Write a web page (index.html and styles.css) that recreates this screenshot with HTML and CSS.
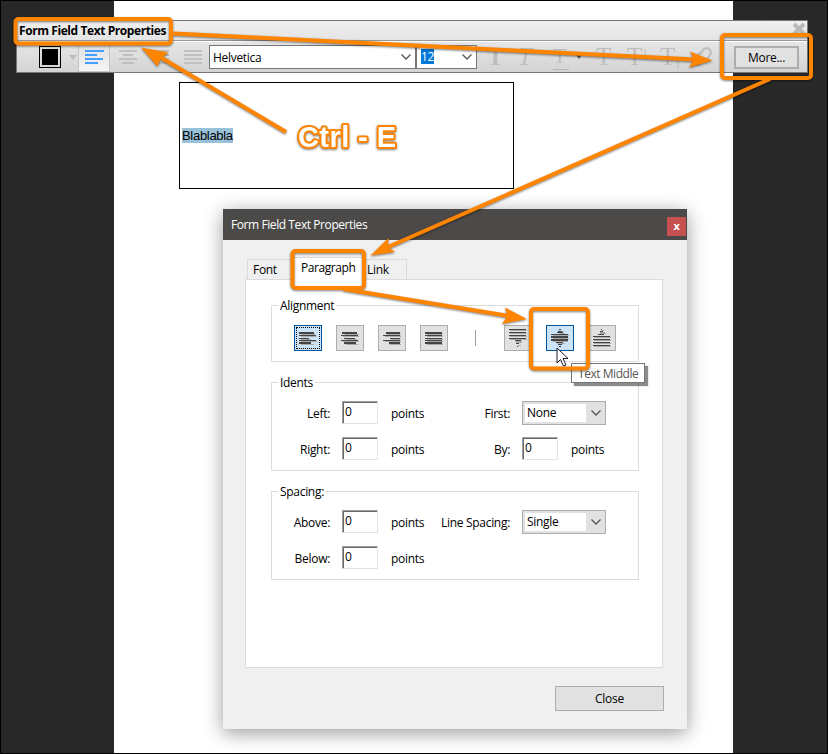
FILE: index.html
```html
<!DOCTYPE html>
<html lang="en">
<head>
    <meta charset="UTF-8">
    <title>Form Field Text Properties</title>
    <link rel="stylesheet" href="styles.css">
</head>
<body>
    <div class="workspace">
        <div class="page">
            <div class="form-field"><span class="selected-text">Blablabla</span></div>
        </div>
    </div>

    <!-- Floating toolbar -->
    <div class="toolbar">
        <div class="toolbar-title">
            <span>Form Field Text Properties</span>
            <svg class="toolbar-close" width="14" height="14" viewBox="0 0 14 14"><path d="M2 2l10 10M12 2L2 12"/></svg>
        </div>
        <div class="toolbar-row">
            <div class="swatch"><div class="swatch-color"></div></div>
            <svg class="swatch-arrow" width="8" height="5"><path d="M0 0h8L4 5z"/></svg>
            <div class="tool active"><svg width="20" height="16"><path d="M1 2h19M1 6h12M1 10h18M1 14h13"/></svg></div>
            <div class="tool center"><svg width="20" height="16"><path d="M1 2h18M5 6h10M1 10h18M4 14h12"/></svg></div>
            <div class="tool right"><svg width="20" height="16"><path d="M1 2h18M7 6h12M2 10h17M6 14h13"/></svg></div>
            <div class="tool justify"><svg width="20" height="16"><path d="M1 2h18M1 6h18M1 10h18M1 14h18"/></svg></div>
            <div class="combo font-combo"><span>Helvetica</span><svg width="10" height="6"><path d="M.5.5L5 5L9.5.5"/></svg></div>
            <div class="combo size-combo"><span class="marked">12</span><svg width="10" height="6"><path d="M.5.5L5 5L9.5.5"/></svg></div>
            <div class="letter bold">T</div>
            <div class="letter italic">T</div>
            <div class="letter underline">T</div>
            <svg class="underline-arrow" width="6" height="4"><path d="M0 0h6L3 4z"/></svg>
            <div class="letter strike">T</div>
            <div class="letter super">T<sup>1</sup></div>
            <div class="letter sub">T<sub>1</sub></div>
            <svg class="link-icon" width="22" height="22" viewBox="0 0 22 22"><path d="M9 8l3-4a4 4 0 0 1 7 5l-3 4a4 4 0 0 1-5 1M12 14l-3 4a4 4 0 0 1-6-5l3-4a4 4 0 0 1 5-1"/></svg>
            <button class="more">More...</button>
        </div>
    </div>

    <!-- Properties dialog -->
    <div class="dialog">
        <div class="dialog-title">
            <span>Form Field Text Properties</span>
            <div class="dialog-close">x</div>
        </div>
        <div class="tabs">
            <div class="tab font">Font</div>
            <div class="tab current">Paragraph</div>
            <div class="tab link">Link</div>
        </div>
        <div class="panel">
            <div class="group alignment">
                <div class="legend">Alignment</div>
                <div class="buttons">
                    <div class="icon-button pressed focus"><svg width="20" height="14"><path class="shade" d="M3 3.5h14M3 5.5h15M3 8.5h10M3 10.5h16M3 13.5h13"/><path d="M1 1.5h15M1 2.5h15M1 4.5h17M1 7.5h10M1 9.5h17M1 11.5h12M1 12.5h12"/></svg></div>
                    <div class="icon-button"><svg width="20" height="14"><path class="shade" d="M5 3.5h14M3 5.5h16M6 8.5h11M3 10.5h16M6 13.5h12"/><path d="M2 1.5h15M2 2.5h15M1 4.5h17M4 7.5h11M1 9.5h17M4 11.5h12M4 12.5h12"/></svg></div>
                    <div class="icon-button"><svg width="20" height="14"><path class="shade" d="M5 3.5h14M3 5.5h16M9 8.5h10M3 10.5h16M8 13.5h11"/><path d="M4 1.5h14M4 2.5h14M1 4.5h17M8 7.5h10M1 9.5h17M7 11.5h11M7 12.5h11"/></svg></div>
                    <div class="icon-button"><svg width="20" height="14"><path class="shade" d="M3 3.5h16M3 5.5h16M3 8.5h16M3 10.5h16M3 13.5h16"/><path d="M1 1.5h17M1 2.5h17M1 4.5h17M1 7.5h17M1 9.5h17M1 11.5h17M1 12.5h17"/></svg></div>
                    <div class="divider"></div>
                    <div class="icon-button"><svg width="20" height="20"><path class="shade" d="M2 2.5h17M2 5.5h17M2 8.5h17M2 11.5h17M8 13.5h6M8 14.5h6M10 17.5h3"/><path d="M1 1.5h17M1 4.5h17M1 7.5h17M1 10.5h17M7 12.5h6M8 15.5h3M9 18.5h1"/></svg></div>
                    <div class="icon-button pressed"><svg width="20" height="20"><path class="shade" d="M10 3.5h4M9 5.5h6M3 7.5h16M3 10.5h16M3 13.5h15M7 15.5h8"/><path d="M9 1.5h2M8 3.5h4M7 4.5h6M1 6.5h17M1 8.5h17M1 9.5h17M1 11.5h17M1 12.5h17M6 14.5h7M8 16.5h4M9 18.5h2"/></svg></div>
                    <div class="icon-button"><svg width="20" height="20"><path class="shade" d="M10 2.5h2M8 4.5h5M8 5.5h6M2 9.5h17M2 12.5h17M2 15.5h17M2 18.5h17"/><path d="M9 1.5h1M8 3.5h3M6 6.5h6M1 8.5h17M1 11.5h17M1 14.5h17M1 17.5h17"/></svg></div>
                </div>
            </div>

            <div class="group idents">
                <div class="legend">Idents</div>
                <div class="fields">
                    <label>Left:</label>
                    <div class="input">0</div>
                    <span>points</span>
                    <label>First:</label>
                    <div class="select"><span>None</span><svg width="10" height="6"><path d="M.5.5L5 5L9.5.5"/></svg></div>
                    <label>Right:</label>
                    <div class="input">0</div>
                    <span>points</span>
                    <label>By:</label>
                    <div class="with-unit"><div class="input">0</div><span>points</span></div>
                </div>
            </div>

            <div class="group spacing">
                <div class="legend">Spacing:</div>
                <div class="fields">
                    <label>Above:</label>
                    <div class="input">0</div>
                    <span>points</span>
                    <label>Line Spacing:</label>
                    <div class="select"><span>Single</span><svg width="10" height="6"><path d="M.5.5L5 5L9.5.5"/></svg></div>
                    <label>Below:</label>
                    <div class="input">0</div>
                    <span>points</span>
                </div>
            </div>
        </div>
        <button class="close-button">Close</button>
    </div>

    <div class="tooltip">Text Middle</div>

    <!-- Annotations -->
    <svg class="notes" width="828" height="754" viewBox="0 0 828 754">
        <g class="boxes">
            <rect x="15.5" y="19" width="155.5" height="24.5" rx="3"/>
            <rect x="722" y="35" width="89" height="43" rx="3"/>
            <rect x="292.5" y="251" width="71.5" height="37" rx="3"/>
            <rect x="531" y="309" width="57" height="59.5" rx="3"/>
        </g>
        <g class="lines">
            <path d="M173 33.5L695 59.5"/>
            <path d="M286 132L160 57"/>
            <path d="M770 79L388 247"/>
            <path d="M343 289L509 316"/>
        </g>
        <g class="heads">
            <path d="M712.5 60.5L690 51.5L694 59.5L689 67.5z"/>
            <path d="M141 47.5L168.5 52.5L161 58L157.5 66.5z"/>
            <path d="M370.5 255.5L388.5 238L388 247L395 252z"/>
            <path d="M527 319L505 307.5L507.5 316L502 324z"/>
        </g>
        <text class="shortcut" x="298" y="146.5" textLength="98">Ctrl - E</text>
    </svg>
    <svg class="cursor" width="13" height="20" viewBox="0 0 13 20"><path d="M1 1v15l3.5-3.5 3 6.5 2.5-1-3-6.5h5z"/></svg>
</body>
</html>
```
FILE: styles.css
```css
body {
    margin: 0;
    font-family: "Open Sans", "Noto Sans", sans-serif;
    font-size: 12px;
    letter-spacing: -0.3px;
    color: #000;
}
.workspace {
    box-sizing: border-box;
    width: 828px;
    height: 754px;
    border: 1px solid #000;
    background-color: #282828;
    display: flex;
}
.page {
    width: 619px;
    margin-left: 113px;
    background-color: #fff;
}
.form-field {
    box-sizing: border-box;
    width: 335px;
    height: 107px;
    margin: 81px 0 0 65px;
    padding-left: 2px;
    border: 1px solid #000;
    display: flex;
    align-items: center;
}
.selected-text {
    font-family: "Liberation Sans", sans-serif;
    font-size: 13px;
    line-height: 15px;
    letter-spacing: -0.3px;
    background-color: #99c1da;
}

/* toolbar */
.toolbar {
    position: absolute;
    left: 16px;
    top: 20px;
    box-sizing: border-box;
    width: 792px;
    height: 53px;
    border: 1px solid #777;
    background-color: #dcdcdc;
}
.toolbar-title {
    box-sizing: border-box;
    height: 20px;
    padding: 0 1px 0 2px;
    border-bottom: 1px solid #999;
    background: linear-gradient(#f0f0f0, #e4e4e4);
    display: flex;
    justify-content: space-between;
    font-weight: bold;
    line-height: 19px;
    letter-spacing: -0.42px;
}
.toolbar-close {
    margin-top: 1px;
}
.toolbar-close path {
    stroke: #b9b9b9;
    stroke-width: 4;
}
.toolbar-row {
    display: flex;
    align-items: center;
    height: 31px;
    box-sizing: border-box;
    border-top: 1px solid #fff;
    background: linear-gradient(#e6e6e6, #d4d4d4);
}
.swatch {
    box-sizing: border-box;
    width: 22px;
    height: 22px;
    margin-left: 22px;
    padding: 2px;
    border: 1px solid #000;
}
.swatch-color {
    height: 16px;
    background-color: #000;
}
.swatch-arrow {
    margin-left: 8px;
    fill: #bbb;
}
.tool {
    width: 20px;
    height: 16px;
}
.tool svg, .icon-button svg {
    display: block;
}
.tool path {
    stroke: #c0c0c0;
    stroke-width: 2;
}
.tool.active {
    box-sizing: border-box;
    width: 32px;
    height: 30px;
    margin-left: 1px;
    padding: 6px 5px;
    border: 1px solid #c6c6c6;
    background: linear-gradient(#e0e0e0, #f4f4f4);
}
.tool.active path {
    stroke: #459fff;
}
.tool.center {
    margin-left: 8px;
}
.tool.right {
    margin-left: 12px;
}
.tool.justify {
    margin-left: 13px;
}
.combo {
    box-sizing: border-box;
    height: 24px;
    border: 1px solid #767676;
    background-color: #fff;
    display: flex;
    align-items: center;
    justify-content: space-between;
    padding: 0 4px 0 3px;
}
.combo svg path, .select svg path {
    fill: none;
    stroke: #555;
    stroke-width: 1.3;
}
.font-combo {
    width: 207px;
    margin-left: 6px;
}
.size-combo {
    width: 61px;
    padding-left: 4px;
}
.marked {
    height: 15px;
    line-height: 15px;
    margin-top: -2px;
    color: #fff;
    background-color: #0078d7;
}
.letter {
    width: 16px;
    font-family: "Liberation Serif", serif;
    font-size: 25px;
    font-weight: bold;
    line-height: 28px;
    letter-spacing: 0;
    color: #bebebe;
    white-space: nowrap;
}
.letter.bold {
    margin-left: 10px;
}
.letter.italic {
    margin-left: 15px;
    font-style: italic;
    font-weight: normal;
}
.letter.underline {
    height: 24px;
    line-height: 22px;
    margin-left: 19px;
    font-size: 22px;
    font-weight: normal;
    border-bottom: 1px solid #b5b5b5;
}
.underline-arrow {
    margin-left: 7px;
    fill: #666;
}
.letter.strike, .letter.super, .letter.sub {
    font-weight: normal;
}
.letter.strike {
    margin-left: 14px;
}
.letter.super, .letter.sub {
    width: 22px;
}
.letter.super {
    margin-left: 15px;
}
.letter.sub {
    margin-left: 11px;
}
.letter sup, .letter sub {
    font-size: 11px;
    line-height: 0;
}
.letter sup {
    vertical-align: 9px;
}
.letter sub {
    vertical-align: -3px;
}
.link-icon {
    margin-left: 9px;
    fill: none;
    stroke: #bebebe;
    stroke-width: 2.2;
}
button {
    box-sizing: border-box;
    padding: 0;
    border: 1px solid #adadad;
    background-color: #e1e1e1;
    font: inherit;
    letter-spacing: inherit;
}
.more {
    width: 65px;
    height: 23px;
    margin: 0 8px 0 auto;
    border-width: 2px;
}

/* dialog */
.dialog {
    position: absolute;
    z-index: 0;
    left: 223px;
    top: 209px;
    width: 464px;
    height: 520px;
    background-color: #f0f0f0;
    box-shadow: 0 4px 18px rgba(0, 0, 0, 0.4);
    display: flex;
    flex-direction: column;
}
.dialog-title {
    height: 31px;
    padding-left: 8px;
    background-color: #4c4a48;
    color: #fff;
    line-height: 31px;
    letter-spacing: -0.42px;
    display: flex;
    justify-content: space-between;
}
.dialog-close {
    width: 19px;
    height: 19px;
    margin: 8px 1px 0 0;
    background-color: #c75050;
    font-size: 11px;
    font-weight: bold;
    line-height: 18px;
    text-align: center;
}
.tabs {
    display: flex;
    align-items: flex-end;
    height: 22px;
    margin: 17px 0 0 24px;
}
.tab {
    box-sizing: border-box;
    height: 20px;
    border: 1px solid #d9d9d9;
    border-bottom: none;
    line-height: 20px;
}
.tab.font {
    width: 45px;
    padding-left: 5px;
}
.tab.current {
    width: 74px;
    height: 23px;
    margin-bottom: -1px;
    padding-left: 8px;
    background-color: #fff;
    line-height: 20px;
    letter-spacing: -0.42px;
    z-index: 1;
}
.tab.link {
    width: 41px;
    padding-left: 1px;
    border-left: none;
}
.panel {
    box-sizing: border-box;
    width: 418px;
    height: 389px;
    margin-left: 22px;
    padding: 25px 23px 0 25px;
    border: 1px solid #dcdcdc;
    background-color: #fff;
}
.group {
    box-sizing: border-box;
    width: 368px;
    border: 1px solid #dcdcdc;
}
.alignment {
    height: 57px;
}
.idents, .spacing {
    height: 89px;
    margin-top: 20px;
}
.legend {
    width: max-content;
    height: 16px;
    margin: -9px 0 0 6px;
    padding: 0 2px;
    background-color: #fff;
    line-height: 18px;
}
.buttons {
    display: flex;
    align-items: center;
    gap: 14px;
    margin: 12px 0 0 22px;
}
.icon-button {
    box-sizing: border-box;
    width: 28px;
    height: 26px;
    border: 1px solid #adadad;
    background-color: #e1e1e1;
    display: flex;
    align-items: center;
    justify-content: center;
}
.icon-button path {
    stroke: #444;
    stroke-width: 1;
}
.icon-button .shade {
    stroke: #a9a9a9;
}
.icon-button.pressed {
    border-color: #005499;
    background-color: #cce4f7;
}
.icon-button.focus svg {
    padding: 3px 1px;
    outline: 1px dotted #000;
}
.divider {
    width: 1px;
    height: 16px;
    margin: 0 14px 0 13px;
    background-color: #a0a0a0;
}
.fields {
    display: grid;
    grid-template-columns: 58px 36px 33px 75px 84px;
    grid-template-rows: 24px 24px;
    column-gap: 12px;
    row-gap: 12px;
    margin-top: 11px;
    line-height: 25px;
}
.fields label {
    text-align: right;
    white-space: nowrap;
}
.fields > span {
    padding-left: 1px;
}
.input {
    box-sizing: border-box;
    width: 36px;
    height: 23px;
    padding: 1px 0 0 2px;
    border: 1px solid #e3e3e3;
    border-top-color: #a0a0a0;
    border-left-color: #a0a0a0;
    background-color: #fff;
    box-shadow: inset 1px 1px #696969;
    line-height: 18px;
}
.select {
    box-sizing: border-box;
    height: 24px;
    padding: 2px 4px 2px 2px;
    border: 1px solid #adadad;
    background-color: #e1e1e1;
    display: flex;
    align-items: center;
    justify-content: space-between;
}
.select span {
    width: 59px;
    height: 18px;
    padding-left: 2px;
    background-color: #fff;
    line-height: 18px;
}
.with-unit {
    display: flex;
    gap: 13px;
}
.close-button {
    width: 109px;
    height: 25px;
    margin: 18px 0 0 332px;
}
.tooltip {
    position: absolute;
    left: 571px;
    top: 363px;
    box-sizing: border-box;
    width: 74px;
    height: 20px;
    padding-left: 6px;
    border: 1px solid #767676;
    background-color: #fff;
    box-shadow: 3px 3px 1px rgba(0, 0, 0, 0.45);
    color: #575757;
    line-height: 19px;
    letter-spacing: -0.45px;
    white-space: nowrap;
}

/* annotations */
.notes {
    position: absolute;
    left: 0;
    top: 0;
    pointer-events: none;
    filter: drop-shadow(0 1px 1px rgba(0, 0, 0, 0.5));
}
.boxes rect, .lines path {
    fill: none;
    stroke: #ff8400;
    stroke-width: 4;
}
.heads path {
    fill: #ff8400;
}
.shortcut {
    font-family: "Liberation Sans", sans-serif;
    font-size: 29px;
    font-weight: bold;
    letter-spacing: 0;
    fill: #fff;
    stroke: #ff8400;
    stroke-width: 4;
    stroke-linejoin: round;
    paint-order: stroke;
}
.cursor {
    position: absolute;
    left: 556px;
    top: 347px;
    fill: #fff;
    stroke: #1a1a2a;
}
```
